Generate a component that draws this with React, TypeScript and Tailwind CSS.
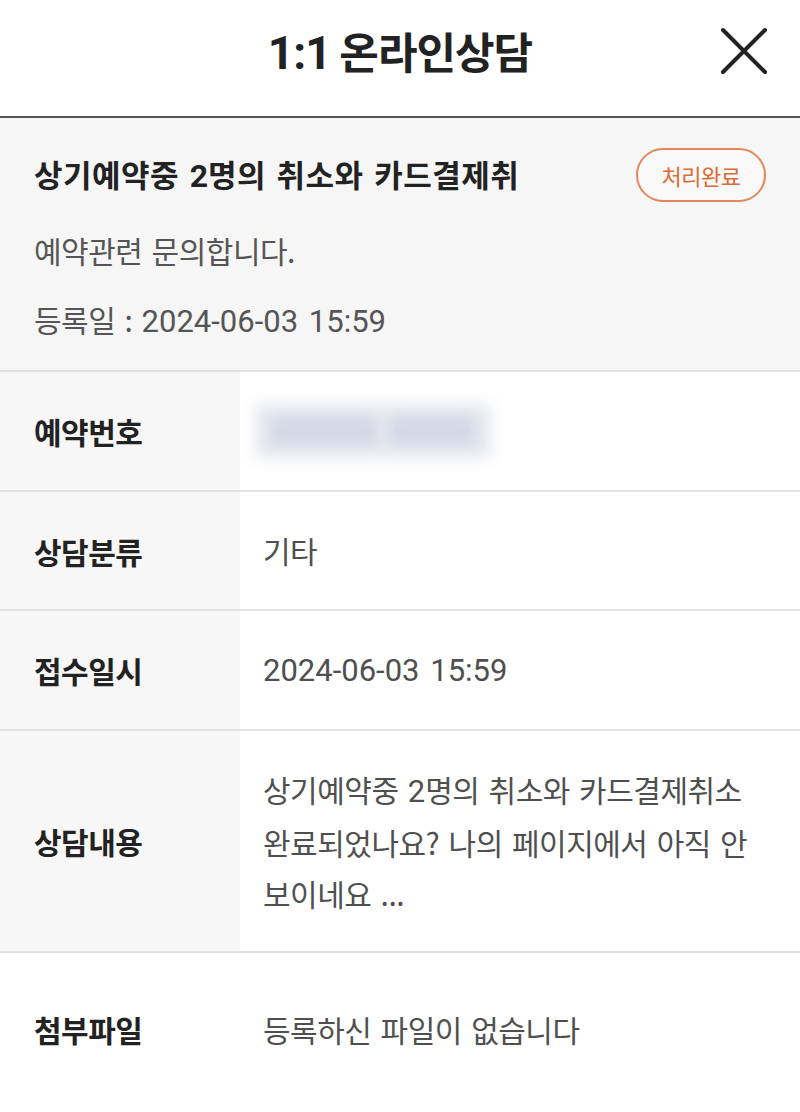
import React from "react";

function Num({ children, bold }: { children: React.ReactNode; bold?: boolean }) {
  return bold ? (
    <span className="font-['Roboto',sans-serif] font-bold text-[32px] tracking-[0px]">{children}</span>
  ) : (
    <span className="font-['Roboto',sans-serif] text-[31px] tracking-[0px]">{children}</span>
  );
}

function Row({
  label,
  children,
  grayLabel = true,
  rowClass,
  last,
}: {
  label: string;
  children: React.ReactNode;
  grayLabel?: boolean;
  rowClass: string;
  last?: boolean;
}) {
  return (
    <div className={`flex ${last ? "" : "border-b-2 border-[#e3e3e3]"} ${rowClass}`}>
      <div
        className={`w-[240px] shrink-0 flex items-center pl-[34px] ${grayLabel ? "bg-[#f7f7f7]" : "bg-white"}`}
      >
        <span className="text-[30px] font-bold tracking-[-0.5px] text-[#222] leading-[40px]">{label}</span>
      </div>
      <div className="flex-1 flex items-center pl-[23px] pr-[10px] text-[30px] tracking-[-0.5px] [word-spacing:3px] text-[#4f4f4f] leading-[51px] whitespace-nowrap">
        {children}
      </div>
    </div>
  );
}

export default function App() {
  return (
    <div className="w-[800px] min-h-[1112px] bg-white font-['Noto_Sans_CJK_KR','Noto_Sans_CJK_SC',sans-serif]">
      {/* Header */}
      <div className="relative h-[118px] border-b-2 border-[#555] flex justify-center">
        <h1 className="pt-[22px] leading-[56px] text-[43px] font-bold tracking-[-1px] text-[#222] whitespace-nowrap">
          <span className="font-['Roboto',sans-serif] text-[46px] tracking-[-1px]">1:1</span>{" "}
          온라인상담
        </h1>
        <button className="absolute right-[32px] top-[27px] w-[48px] h-[48px]" aria-label="닫기">
          <svg viewBox="0 0 48 48" width="48" height="48" fill="none">
            <path d="M3 3 L45 45 M45 3 L3 45" stroke="#222" strokeWidth="4" strokeLinecap="round" />
          </svg>
        </button>
      </div>

      {/* Summary */}
      <div className="bg-[#f6f6f6] px-[34px] pt-[30px] pb-[28px] border-b-2 border-[#e0e0e0]">
        <div className="flex items-center justify-between h-[54px]">
          <span className="text-[31px] font-bold tracking-[0.5px] [word-spacing:3px] text-[#222] leading-[40px] whitespace-nowrap">
            상기예약중 <Num bold>2</Num>명의 취소와 카드결제취
          </span>
          <span className="h-[54px] w-[130px] rounded-full border-2 border-[#e3875a] flex items-center justify-center text-[22px] tracking-[-0.5px] text-[#db6a33] bg-[#f9f9f9]">
            처리완료
          </span>
        </div>
        <div className="mt-[28px] text-[30px] tracking-[-0.5px] [word-spacing:3px] text-[#555] leading-[40px]">
          예약관련 문의합니다.
        </div>
        <div className="mt-[29px] text-[30px] tracking-[-0.5px] [word-spacing:3px] text-[#555] leading-[40px]">
          등록일 : <Num>2024-06-03 15:59</Num>
        </div>
      </div>

      {/* Table */}
      <Row label="예약번호" rowClass="h-[120px]">
        <div className="ml-[-8px] blur-[7px]">
          <div className="w-[236px] h-[54px] bg-[#e6e9f0] flex items-center gap-[12px] px-[16px]">
            <div className="w-[110px] h-[30px] bg-[#d3d9e5]" />
            <div className="w-[90px] h-[30px] bg-[#d3d9e5]" />
          </div>
        </div>
      </Row>
      <Row label="상담분류" rowClass="h-[119px]">
        기타
      </Row>
      <Row label="접수일시" rowClass="h-[120px]">
        <Num>2024-06-03 15:59</Num>
      </Row>
      <Row label="상담내용" rowClass="h-[222px]">
        <div className="flex flex-col">
          <div>
            상기예약중 <Num>2</Num>명의 취소와 카드결제취소
          </div>
          <div>완료되었나요? 나의 페이지에서 아직 안</div>
          <div>보이네요 ...</div>
        </div>
      </Row>
      <Row label="첨부파일" grayLabel={false} rowClass="h-[152px]" last>
        등록하신 파일이 없습니다
      </Row>
    </div>
  );
}
